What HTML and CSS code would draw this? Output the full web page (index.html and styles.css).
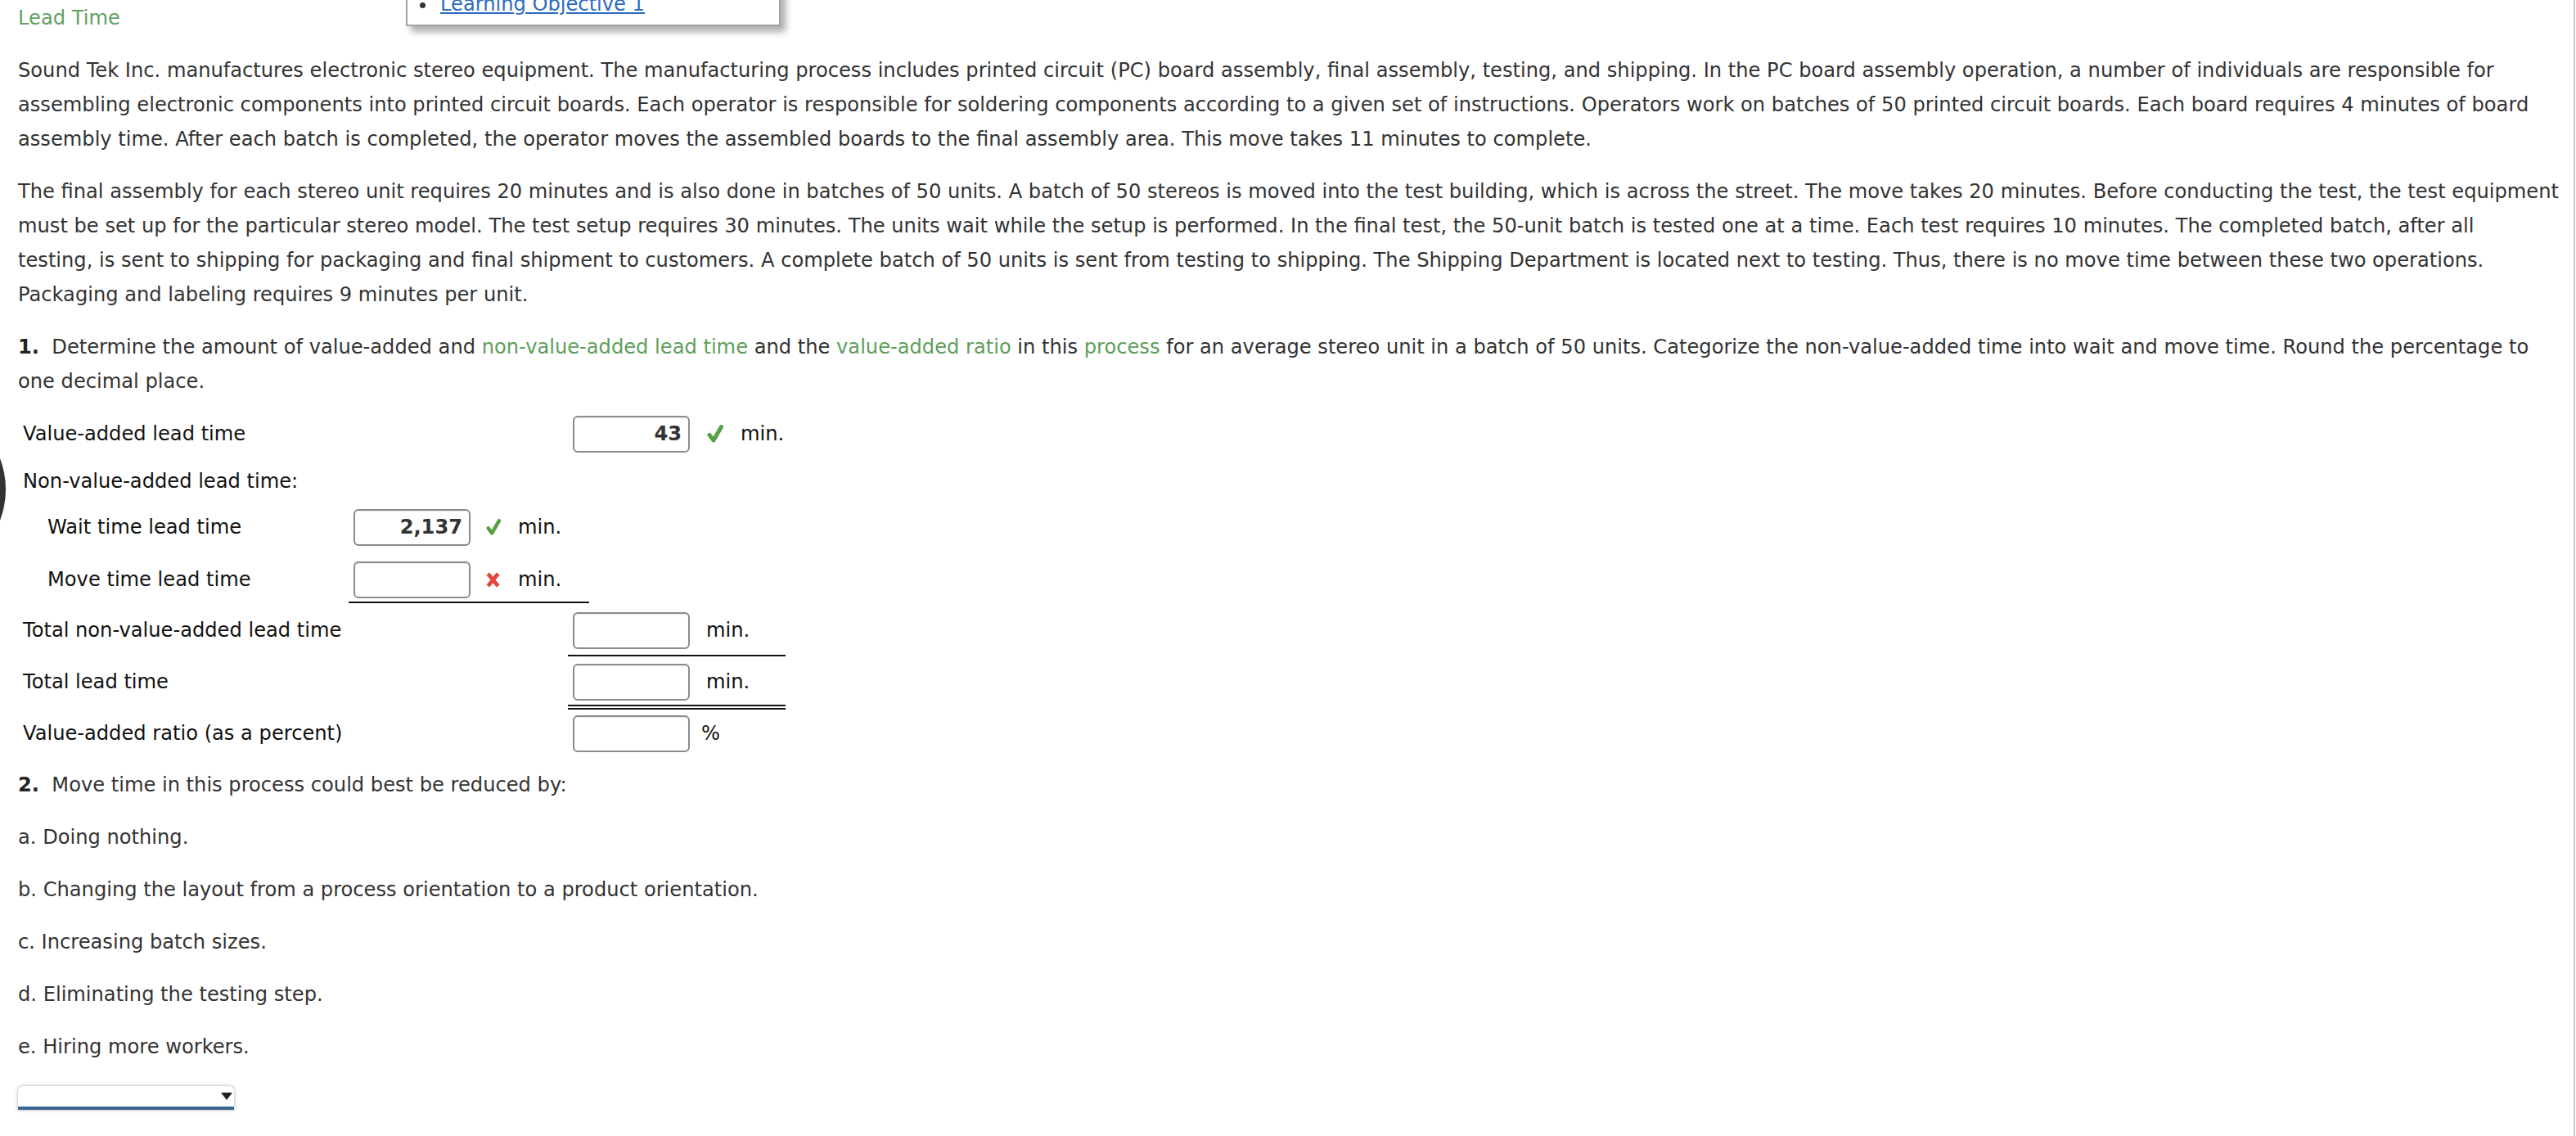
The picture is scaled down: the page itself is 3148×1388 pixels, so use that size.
FILE: index.html
```html
<!DOCTYPE html>
<html>
<head>
<meta charset="utf-8">
<title>Lead Time</title>
<link rel="stylesheet" href="styles.css">
</head>
<body>
<div class="page">
  <div class="popover">
    <ul class="lo-list"><li><a href="#" class="lo-link">Learning Objective 1</a></li></ul>
  </div>
  <div class="side-tab"></div>

  <p class="title">Lead Time</p>

  <p class="para">Sound Tek Inc. manufactures electronic stereo equipment. The manufacturing process includes printed circuit (PC) board assembly, final assembly, testing, and shipping. In the PC board assembly operation, a number of individuals are responsible for<br>assembling electronic components into printed circuit boards. Each operator is responsible for soldering components according to a given set of instructions. Operators work on batches of 50 printed circuit boards. Each board requires 4 minutes of board<br>assembly time. After each batch is completed, the operator moves the assembled boards to the final assembly area. This move takes 11 minutes to complete.</p>

  <p class="para">The final assembly for each stereo unit requires 20 minutes and is also done in batches of 50 units. A batch of 50 stereos is moved into the test building, which is across the street. The move takes 20 minutes. Before conducting the test, the test equipment<br>must be set up for the particular stereo model. The test setup requires 30 minutes. The units wait while the setup is performed. In the final test, the 50-unit batch is tested one at a time. Each test requires 10 minutes. The completed batch, after all<br>testing, is sent to shipping for packaging and final shipment to customers. A complete batch of 50 units is sent from testing to shipping. The Shipping Department is located next to testing. Thus, there is no move time between these two operations.<br>Packaging and labeling requires 9 minutes per unit.</p>

  <p class="para"><b>1.</b>&nbsp; Determine the amount of value-added and <span class="term">non-value-added lead time</span> and the <span class="term">value-added ratio</span> in this <span class="term">process</span> for an average stereo unit in a batch of 50 units. Categorize the non-value-added time into wait and move time. Round the percentage to<br>one decimal place.</p>

  <div class="form">
    <div class="frow r1">
      <div class="lbl">Value-added lead time</div>
      <div class="cell"></div>
      <div class="cell"><div class="box">43</div><span class="mark"><svg class="check" viewBox="0 0 22 24" width="22" height="24"><path d="M4 13.5 L9 20 L18.5 3.5" fill="none" stroke="#55a146" stroke-width="5" stroke-linecap="round" stroke-linejoin="round"/></svg></span><span class="unit">min.</span></div>
    </div>
    <div class="frow r2">
      <div class="lbl">Non-value-added lead time:</div>
    </div>
    <div class="frow r3">
      <div class="lbl indent">Wait time lead time</div>
      <div class="cell"><div class="box">2,137</div><span class="mark sm"><svg class="check" viewBox="0 0 22 24" width="20" height="22"><path d="M4 13.5 L9 20 L18.5 3.5" fill="none" stroke="#55a146" stroke-width="5" stroke-linecap="round" stroke-linejoin="round"/></svg></span><span class="unit">min.</span></div>
      <div class="cell"></div>
    </div>
    <div class="frow r4">
      <div class="lbl indent">Move time lead time</div>
      <div class="cell"><div class="box"></div><span class="mark sm"><svg class="cross" viewBox="0 0 20 20" width="19" height="19"><path d="M3.5 2 L16.5 18 M16.5 2 L3.5 18" fill="none" stroke="#e5453b" stroke-width="5"/></svg></span><span class="unit">min.</span></div>
      <div class="cell"></div>
    </div>
    <div class="rule rule-b"></div>
    <div class="frow r5">
      <div class="lbl">Total non-value-added lead time</div>
      <div class="cell"></div>
      <div class="cell"><div class="box"></div><span class="unit">min.</span></div>
    </div>
    <div class="rule rule-c"></div>
    <div class="frow r6">
      <div class="lbl">Total lead time</div>
      <div class="cell"></div>
      <div class="cell"><div class="box"></div><span class="unit">min.</span></div>
    </div>
    <div class="rule-double"></div>
    <div class="frow r7">
      <div class="lbl">Value-added ratio (as a percent)</div>
      <div class="cell"></div>
      <div class="cell"><div class="box"></div><span class="unit pct">%</span></div>
    </div>
  </div>

  <p class="para q2"><b>2.</b>&nbsp; Move time in this process could best be reduced by:</p>
  <p class="para">a. Doing nothing.</p>
  <p class="para">b. Changing the layout from a process orientation to a product orientation.</p>
  <p class="para">c. Increasing batch sizes.</p>
  <p class="para">d. Eliminating the testing step.</p>
  <p class="para">e. Hiring more workers.</p>

  <div class="dropdown"><span class="caret"></span></div>
</div>
</body>
</html>
```

FILE: styles.css
```css
html, body {
  margin: 0;
  padding: 0;
  background: #ffffff;
}

body {
  font-family: "DejaVu Sans", Verdana, sans-serif;
  font-size: 24.15px;
  color: #333333;
  overflow: hidden;
}

.page {
  position: relative;
  box-sizing: border-box;
  width: 3147px;
  min-height: 1388px;
  padding: 2px 0 0 22px;
  border-right: 2px solid #c9c9c9;
}

.title {
  margin: 0;
  font-size: 24.15px;
  line-height: 41px;
  color: #62a063;
}

.para {
  margin: 22px 0 0 0;
  line-height: 42px;
  white-space: nowrap;
}

.para b {
  color: #222;
}

.term {
  color: #5e9e5a;
}

/* popover at the top */
.popover {
  position: absolute;
  left: 496px;
  top: -40px;
  width: 458px;
  height: 72px;
  box-sizing: border-box;
  border: 2px solid #a3a3a3;
  background: #fff;
  box-shadow: 6px 7px 8px rgba(0, 0, 0, 0.32);
  z-index: 2;
}

.lo-list {
  margin: 0;
  padding: 22px 0 0 36px;
  list-style: disc;
  color: #333;
}

.lo-list li {
  line-height: 42px;
  padding-left: 4px;
}

.lo-link {
  color: #2c6cc0;
  text-decoration: underline;
}

.side-tab {
  position: absolute;
  left: -205px;
  top: 492px;
  width: 212px;
  height: 212px;
  border-radius: 50%;
  background: #333;
}

/* form */
.form {
  padding-left: 6px;
  margin-top: 21px;
  color: #111;
}

.frow {
  display: grid;
  grid-template-columns: 398px 268px 1fr;
  align-items: center;
  height: 44px;
}

.lbl {
  white-space: nowrap;
}

.lbl.indent {
  padding-left: 30px;
}

.cell {
  display: flex;
  align-items: center;
  height: 44px;
}

.box {
  box-sizing: border-box;
  width: 143px;
  height: 45px;
  margin-left: 6px;
  border: 2px solid #8b8b8b;
  border-radius: 6px;
  background: #fff;
  text-align: right;
  padding-right: 8px;
  font-weight: bold;
  line-height: 41px;
  color: #333;
  box-shadow: inset 0 1px 1px rgba(0,0,0,0.08);
}

.mark {
  display: flex;
  align-items: center;
  width: 22px;
  margin-left: 20px;
}

.mark.sm {
  width: 20px;
  margin-left: 18px;
}

.unit {
  margin-left: 20px;
  color: #111;
}

.unit.pct {
  margin-left: 14px;
}

.r1 { margin-top: 0; }
.r2 { margin-top: 14px; }
.r3 { margin-top: 12px; }
.r4 { margin-top: 20px; }
.r5 { margin-top: 11px; }
.r6 { margin-top: 9px; }
.r7 { margin-top: 7px; }

.rule {
  height: 2px;
  background: #111;
}

.rule-b {
  margin-top: 5px;
  margin-left: 398px;
  width: 294px;
}

.rule-c {
  margin-top: 8px;
  margin-left: 666px;
  width: 266px;
}

.rule-double {
  margin-top: 6px;
  margin-left: 666px;
  width: 266px;
  height: 2px;
  border-top: 2px solid #111;
  border-bottom: 2px solid #111;
}

.q2 {
  margin-top: 20px;
}

.dropdown {
  position: relative;
  margin-top: 27px;
  width: 264px;
  box-sizing: border-box;
  background: #fff;
  border-radius: 6px 6px 0 0;
  box-shadow: 0 0 4px rgba(0, 0, 0, 0.35);
  border-bottom: 4px solid #3a6592;
  height: 29px;
}

.caret {
  position: absolute;
  right: 2px;
  top: 8px;
  width: 0;
  height: 0;
  border-left: 7px solid transparent;
  border-right: 7px solid transparent;
  border-top: 9px solid #222;
}
```
